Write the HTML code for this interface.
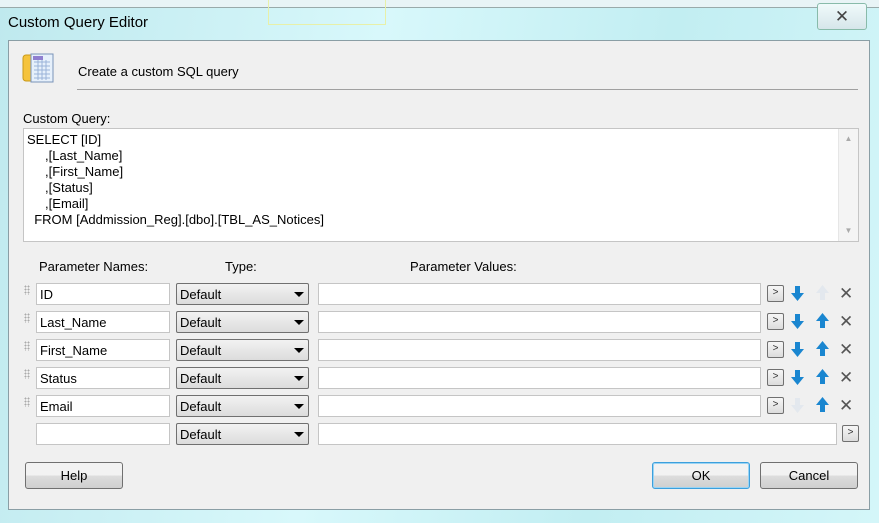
<!DOCTYPE html><html><head><style>
*{box-sizing:border-box}
body{margin:0;width:879px;height:523px;overflow:hidden;position:relative;font-family:"Liberation Sans",sans-serif;font-size:12px;background:linear-gradient(100deg,#bfe9ee,#d8f8fb 40%,#c2eef2 70%,#d4f6f9);}
.a{position:absolute}
.dlg{left:8px;top:40px;width:862px;height:470px;background:#f0f0f0;border:1px solid #8a9ea5}
.in{position:absolute;background:#fff;border:1px solid #c5c5c5;height:22px;padding:3px 3px;font-size:13px}
.sel{position:absolute;height:22px;border:1px solid #707070;background:linear-gradient(#f2f2f2,#dcdcdc);font-size:13px;padding:3px 3px;border-radius:2px}
.sel:after{content:"";position:absolute;right:4px;top:8px;border:5px solid transparent;border-top:5px solid #000;border-bottom:0}
.gb{position:absolute;width:17px;height:17px;border:1px solid #707070;border-radius:2px;background:linear-gradient(#f6f6f6,#dcdcdc);font-size:10px;text-align:center;line-height:14px;color:#333}
.btn{position:absolute;height:27px;border:1px solid #707070;border-radius:3px;background:linear-gradient(#f2f2f2 50%,#dddddd 50%,#cfcfcf);text-align:center;line-height:25px;font-size:13px}
.grip{position:absolute;width:6px;height:10px;background:radial-gradient(circle,#aaa 0.8px,transparent 1px) 0 0/3px 3px}
.x{position:absolute;font-size:17px;color:#555;line-height:14px}
</style></head><body>
<div class="a" style="left:0;top:0;width:879px;height:8px;background:#e8f4f6;border-bottom:1px solid #9aa"></div>
<div class="a" style="left:268px;top:0;width:118px;height:25px;border:1px solid #e8f0a8;border-top:0"></div>
<div class="a" style="left:8px;top:14px;font-size:15px;color:#000">Custom Query Editor</div>
<div class="a" style="left:817px;top:3px;width:50px;height:27px;border:1px solid #8ba;border-radius:3px;background:linear-gradient(#f0fafb,#d6e6ea);text-align:center;font-size:17px;line-height:25px;color:#444">✕</div>
<div class="a dlg"></div>
<svg class="a" style="left:22px;top:52px" width="34" height="32"><rect x="1" y="3" width="14" height="26" rx="3" fill="#f5c33c" stroke="#c99a1a"/><rect x="9" y="2" width="22" height="28" fill="#e6f0fb" stroke="#7a93b8"/><g stroke="#9ab3d8"><path d="M12 10h16M12 14h16M12 18h16M12 22h16M12 26h16M16 8v20M20 8v20M24 8v20"/></g><rect x="11" y="4" width="10" height="4" fill="#8f7fd0"/></svg>
<div class="a" style="left:78px;top:64px;font-size:13px">Create a custom SQL query</div>
<div class="a" style="left:77px;top:89px;width:781px;height:1px;background:#a0a0a0"></div>
<div class="a" style="left:23px;top:111px;font-size:13px">Custom Query:</div>
<div class="a" style="left:23px;top:128px;width:836px;height:114px;background:#fff;border:1px solid #c5c5c5;font-size:13px;line-height:16px;padding:3px 3px;white-space:pre">SELECT [ID]
     ,[Last_Name]
     ,[First_Name]
     ,[Status]
     ,[Email]
  FROM [Addmission_Reg].[dbo].[TBL_AS_Notices]</div>
<div class="a" style="left:838px;top:129px;width:20px;height:112px;background:#f4f4f4;border-left:1px solid #e6e6e6;color:#aaa;font-size:8px;text-align:center"><div style="margin-top:5px">▲</div><div style="margin-top:83px">▼</div></div>
<div class="a" style="left:39px;top:259px;font-size:13px">Parameter Names:</div>
<div class="a" style="left:225px;top:259px;font-size:13px">Type:</div>
<div class="a" style="left:410px;top:259px;font-size:13px">Parameter Values:</div>

<div class="grip" style="left:24px;top:285px"></div><div class="in" style="left:36px;top:283px;width:134px">ID</div><div class="sel" style="left:176px;top:283px;width:133px">Default</div><div class="in" style="left:318px;top:283px;width:443px"></div><div class="gb" style="left:767px;top:285px">&gt;</div>
<svg class="a" style="left:790px;top:284px" width="44" height="18"><path d="M5 2h5v7h4l-6.5 8L1 9h4z" fill="#1a86d0"/><path d="M30 16h5V9h4l-6.5-8L26 9h4z" fill="#e3e8ee"/></svg><div class="x" style="left:839px;top:287px">✕</div>

<div class="grip" style="left:24px;top:313px"></div><div class="in" style="left:36px;top:311px;width:134px">Last_Name</div><div class="sel" style="left:176px;top:311px;width:133px">Default</div><div class="in" style="left:318px;top:311px;width:443px"></div><div class="gb" style="left:767px;top:313px">&gt;</div>
<svg class="a" style="left:790px;top:312px" width="44" height="18"><path d="M5 2h5v7h4l-6.5 8L1 9h4z" fill="#1a86d0"/><path d="M30 16h5V9h4l-6.5-8L26 9h4z" fill="#1a86d0"/></svg><div class="x" style="left:839px;top:315px">✕</div>

<div class="grip" style="left:24px;top:341px"></div><div class="in" style="left:36px;top:339px;width:134px">First_Name</div><div class="sel" style="left:176px;top:339px;width:133px">Default</div><div class="in" style="left:318px;top:339px;width:443px"></div><div class="gb" style="left:767px;top:341px">&gt;</div>
<svg class="a" style="left:790px;top:340px" width="44" height="18"><path d="M5 2h5v7h4l-6.5 8L1 9h4z" fill="#1a86d0"/><path d="M30 16h5V9h4l-6.5-8L26 9h4z" fill="#1a86d0"/></svg><div class="x" style="left:839px;top:343px">✕</div>

<div class="grip" style="left:24px;top:369px"></div><div class="in" style="left:36px;top:367px;width:134px">Status</div><div class="sel" style="left:176px;top:367px;width:133px">Default</div><div class="in" style="left:318px;top:367px;width:443px"></div><div class="gb" style="left:767px;top:369px">&gt;</div>
<svg class="a" style="left:790px;top:368px" width="44" height="18"><path d="M5 2h5v7h4l-6.5 8L1 9h4z" fill="#1a86d0"/><path d="M30 16h5V9h4l-6.5-8L26 9h4z" fill="#1a86d0"/></svg><div class="x" style="left:839px;top:371px">✕</div>

<div class="grip" style="left:24px;top:397px"></div><div class="in" style="left:36px;top:395px;width:134px">Email</div><div class="sel" style="left:176px;top:395px;width:133px">Default</div><div class="in" style="left:318px;top:395px;width:443px"></div><div class="gb" style="left:767px;top:397px">&gt;</div>
<svg class="a" style="left:790px;top:396px" width="44" height="18"><path d="M5 2h5v7h4l-6.5 8L1 9h4z" fill="#e3e8ee"/><path d="M30 16h5V9h4l-6.5-8L26 9h4z" fill="#1a86d0"/></svg><div class="x" style="left:839px;top:399px">✕</div>

<div class="in" style="left:36px;top:423px;width:134px"></div><div class="sel" style="left:176px;top:423px;width:133px">Default</div><div class="in" style="left:318px;top:423px;width:519px"></div><div class="gb" style="left:842px;top:425px">&gt;</div>

<div class="btn" style="left:25px;top:462px;width:98px">Help</div>
<div class="btn" style="left:652px;top:462px;width:98px;border-color:#3c9fdc;box-shadow:inset 0 0 0 1px #9ad4f4">OK</div>
<div class="btn" style="left:760px;top:462px;width:98px">Cancel</div>
</body></html>
